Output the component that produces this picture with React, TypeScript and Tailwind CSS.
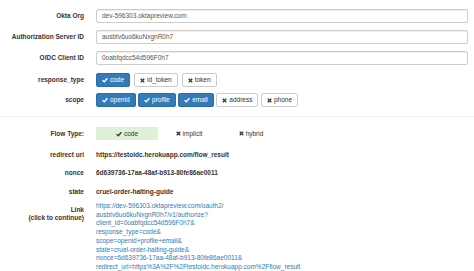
import React from 'react';

const Ok = ({ className = '' }: { className?: string }) => (
  <svg viewBox="0 0 10 10" className={`w-[6px] h-[6px] ${className}`}>
    <path d="M1 5.2 L3.8 8 L9 2" fill="none" stroke="currentColor" strokeWidth="2.3" />
  </svg>
);

const Remove = ({ className = '' }: { className?: string }) => (
  <svg viewBox="0 0 10 10" className={`w-[5px] h-[5px] ${className}`}>
    <path d="M1.5 1.5 L8.5 8.5 M8.5 1.5 L1.5 8.5" fill="none" stroke="currentColor" strokeWidth="2.6" />
  </svg>
);

const RESPONSE = [
  { label: 'code', on: true },
  { label: 'id_token', on: false },
  { label: 'token', on: false },
];

const SCOPES = [
  { label: 'openid', on: true },
  { label: 'profile', on: true },
  { label: 'email', on: true },
  { label: 'address', on: false },
  { label: 'phone', on: false },
];

const LINK = [
  'https://dev-596303.oktapreview.com/oauth2/',
  'ausbtv6uo6kuNxgnR0h7/v1/authorize?',
  'client_id=0oabfqdcc54d596F0h7&',
  'response_type=code&',
  'scope=openid+profile+email&',
  'state=cruel-order-halting-guide&',
  'nonce=6d639736-17aa-48af-b913-80fe86ae0011&',
  'redirect_uri=https%3A%2F%2Ftestoidc.herokuapp.com%2Fflow_result',
];

function Label({ children, className = '' }: { children: React.ReactNode; className?: string }) {
  return (
    <div className={`w-[84px] shrink-0 text-right font-bold text-[6.5px] text-[#333] ${className}`}>{children}</div>
  );
}

function Toggle({ label, on }: { label: string; on: boolean }) {
  return (
    <div
      className={
        on
          ? 'h-[14px] px-[5px] flex items-center gap-[2px] rounded-[2px] border border-[#2e6da4] bg-[#337ab7] text-white text-[6.5px]'
          : 'h-[14px] px-[5px] flex items-center gap-[2px] rounded-[2px] border border-[#ccc] bg-white text-[#333] text-[6.5px]'
      }
    >
      {on ? <Ok /> : <Remove />}
      <span>{label}</span>
    </div>
  );
}

function Field({ label, value, className = '' }: { label: string; value: string; className?: string }) {
  return (
    <div className={`flex items-center gap-[12px] ${className}`}>
      <Label>{label}</Label>
      <div className="flex-1 h-[14px] mr-[6px] flex items-center px-[5px] rounded-[2px] border border-[#ccc] shadow-[inset_0_1px_1px_rgba(0,0,0,0.075)] text-[6.5px] text-[#555]">
        {value}
      </div>
    </div>
  );
}

function InfoRow({ label, value, className = '' }: { label: string; value: string; className?: string }) {
  return (
    <div className={`flex items-center gap-[12px] h-[14px] ${className}`}>
      <Label>{label}</Label>
      <div className="font-bold text-[6.5px] text-[#333]">{value}</div>
    </div>
  );
}

export default function App() {
  return (
    <div className="w-[474px] h-[271px] overflow-hidden bg-white pt-[9px]" style={{ fontFamily: '"Liberation Sans", Arial, sans-serif' }}>
      <Field label="Okta Org" value="dev-596303.oktapreview.com" />
      <Field label="Authorization Server ID" value="ausbtv6uo6kuNxgnR0h7" className="mt-[7px]" />
      <Field label="OIDC Client ID" value="0oabfqdcc54d596F0h7" className="mt-[7px]" />

      <div className="flex items-center gap-[12px] mt-[8px]">
        <Label>response_type</Label>
        <div className="flex gap-[4px]">
          {RESPONSE.map((r) => (
            <Toggle key={r.label} {...r} />
          ))}
        </div>
      </div>

      <div className="flex items-center gap-[12px] mt-[6px]">
        <Label>scope</Label>
        <div className="flex gap-[2.5px]">
          {SCOPES.map((s) => (
            <Toggle key={s.label} {...s} />
          ))}
        </div>
      </div>

      <div className="mt-[9px] border-t border-[#eee]" />

      <div className="flex items-center gap-[12px] mt-[10px]">
        <Label>Flow Type:</Label>
        <div className="flex text-[6.5px] text-[#333]">
          <div className="w-[62px] h-[13px] flex items-center justify-center gap-[2px] bg-[#dff0d8]">
            <Ok /> code
          </div>
          <div className="w-[62px] h-[13px] flex items-center justify-center gap-[2px]">
            <Remove /> implicit
          </div>
          <div className="w-[62px] h-[13px] flex items-center justify-center gap-[2px]">
            <Remove /> hybrid
          </div>
        </div>
      </div>

      <InfoRow label="redirect uri" value="https://testoidc.herokuapp.com/flow_result" className="mt-[8px]" />
      <InfoRow label="nonce" value="6d639736-17aa-48af-b913-80fe86ae0011" className="mt-[4px]" />
      <InfoRow label="state" value="cruel-order-halting-guide" className="mt-[5px]" />

      <div className="flex gap-[12px] mt-[3px]">
        <Label className="pt-[4px] leading-[8px]">
          Link
          <br />
          (click to continue)
        </Label>
        <a href="#" className="text-[6.5px] leading-[8.7px] text-[#337ab7]">
          {LINK.map((l) => (
            <div key={l}>{l}</div>
          ))}
        </a>
      </div>
    </div>
  );
}
